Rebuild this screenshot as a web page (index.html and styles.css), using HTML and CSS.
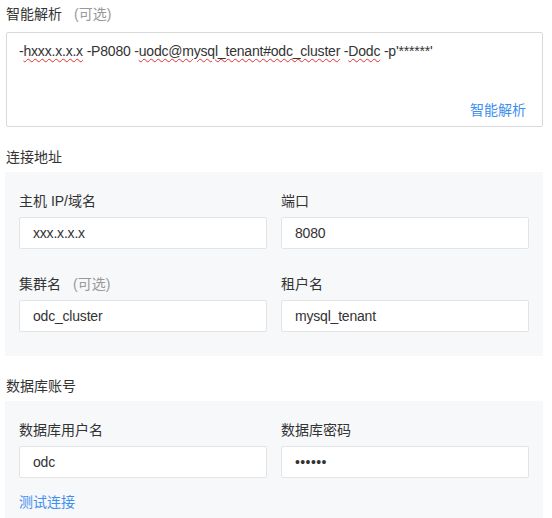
FILE: index.html
```html
<!DOCTYPE html>
<html lang="zh-CN">
<head>
<meta charset="utf-8">
<title>连接配置</title>
<link rel="stylesheet" href="styles.css">
</head>
<body>
<div class="page">
  <div class="title">智能解析<span class="optional">(可选)</span></div>
  <div class="parse-box">
    <div class="parse-text">-<span class="typo">hxxx.x.x.x</span> -P8080 -<span class="typo">uodc@mysql_tenant#odc_cluster</span> -<span class="typo">Dodc</span> -p'******'</div>
    <div class="parse-action"><span class="link">智能解析</span></div>
  </div>

  <div class="section-title">连接地址</div>
  <div class="panel">
    <div class="grid">
      <div class="item">
        <div class="label">主机 IP/域名</div>
        <div class="input">xxx.x.x.x</div>
      </div>
      <div class="item">
        <div class="label">端口</div>
        <div class="input">8080</div>
      </div>
      <div class="item">
        <div class="label">集群名<span class="optional">(可选)</span></div>
        <div class="input">odc_cluster</div>
      </div>
      <div class="item">
        <div class="label">租户名</div>
        <div class="input">mysql_tenant</div>
      </div>
    </div>
  </div>

  <div class="section-title">数据库账号</div>
  <div class="panel panel-account">
    <div class="grid">
      <div class="item">
        <div class="label">数据库用户名</div>
        <div class="input">odc</div>
      </div>
      <div class="item">
        <div class="label">数据库密码</div>
        <div class="input password">••••••</div>
      </div>
    </div>
    <div class="test-link"><span class="link">测试连接</span></div>
  </div>
</div>
</body>
</html>
```
FILE: styles.css
```css
* { box-sizing: border-box; }
html, body { margin: 0; padding: 0; background: #ffffff; }
body {
  font-family: "Liberation Sans", "Noto Sans CJK SC", sans-serif;
  font-size: 14px;
  color: #333333;
  overflow: hidden;
}
.page {
  width: 543px;
  padding: 3px 0 0 5px;
}
.title {
  height: 22px;
  line-height: 22px;
  padding-left: 1px;
  margin-bottom: 7px;
  color: #333333;
}
.optional {
  margin-left: 12px;
  color: #999999;
}
.parse-box {
  margin-left: 1px;
  height: 95px;
  border: 1px solid #d9d9d9;
  border-radius: 2px;
  background: #ffffff;
  display: flex;
  flex-direction: column;
  justify-content: space-between;
  padding: 7px 16px 5px 12px;
}
.parse-text {
  line-height: 22px;
  color: #333333;
  white-space: nowrap;
  letter-spacing: -0.2px;
}
.typo {
  text-decoration: underline wavy #e0302e;
  text-decoration-thickness: 1px;
  text-underline-offset: 2px;
}
.parse-action {
  display: flex;
  justify-content: flex-end;
  line-height: 22px;
}
.link { color: #3f8ff0; }
.section-title {
  height: 22px;
  line-height: 22px;
  padding-left: 1px;
  margin-top: 19px;
  margin-bottom: 4px;
  color: #333333;
}
.panel {
  background: #f7f8fa;
  padding: 18px 14px 24px 14px;
}
.panel-account { padding-bottom: 10px; }
.grid {
  display: grid;
  grid-template-columns: 1fr 1fr;
  column-gap: 14px;
  row-gap: 24px;
}
.label {
  height: 22px;
  line-height: 22px;
  margin-bottom: 5px;
  color: #333333;
}
.input {
  height: 32px;
  line-height: 30px;
  border: 1px solid #e3e4e6;
  border-radius: 2px;
  background: #ffffff;
  padding: 0 13px;
  color: #333333;
  letter-spacing: -0.2px;
}
.password { letter-spacing: 0.4px; }
.test-link {
  margin-top: 13px;
  height: 22px;
  line-height: 22px;
}
```
